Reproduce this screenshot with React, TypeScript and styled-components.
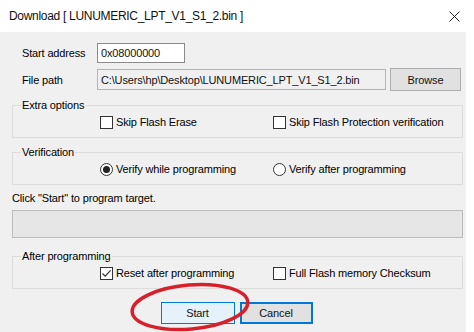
import React from "react";
import styled, { createGlobalStyle } from "styled-components";

const Global = createGlobalStyle`
  html, body { margin: 0; padding: 0; background: #ffffff; }
  body { font-family: "Liberation Sans", Arial, sans-serif; font-size: 11px; color: #000; }
  * { box-sizing: border-box; }
`;

const Window = styled.div`
  position: relative;
  width: 474px;
  height: 332px;
  display: flex;
  flex-direction: column;
  background: #ffffff;
  overflow: hidden;
`;

const TitleBar = styled.div`
  height: 32px;
  flex-shrink: 0;
  display: flex;
  align-items: center;
  justify-content: space-between;
  padding: 0 14px 0 9px;
`;

const Title = styled.span`
  font-size: 12px;
  letter-spacing: -0.3px;
  color: #111;
`;

const Body = styled.div`
  flex: 1;
  margin-right: 8px;
  background: #f0f0f0;
  padding: 11px 3px 0 12px;
  display: flex;
  flex-direction: column;
  letter-spacing: -0.15px;
`;

const FieldRow = styled.div<{ $h: number; $mt?: number }>`
  display: flex;
  align-items: center;
  gap: 4px;
  height: ${(p) => p.$h}px;
  margin-top: ${(p) => p.$mt ?? 0}px;
  padding-left: 10px;
`;

const FieldLabel = styled.span`
  width: 71px;
  flex-shrink: 0;
`;

const TextBox = styled.input<{ $w: number; $ro?: boolean }>`
  width: ${(p) => p.$w}px;
  height: ${(p) => (p.$ro ? 21 : 20)}px;
  border: 1px solid ${(p) => (p.$ro ? "#b4b4b4" : "#8a8a8a")};
  background: ${(p) => (p.$ro ? "#f0f0f0" : "#ffffff")};
  padding: 0 3px;
  font: inherit;
  letter-spacing: -0.15px;
  color: #111;
  outline: none;
`;

const Button = styled.button<{ $w: number; $variant?: "hover" | "default" | "plain" }>`
  width: ${(p) => p.$w}px;
  height: ${(p) => (p.$variant === "plain" ? 23 : 22)}px;
  font: inherit;
  letter-spacing: -0.15px;
  color: #111;
  padding: 0;
  background: ${(p) => (p.$variant === "hover" ? "#e5f1fb" : "#e1e1e1")};
  border: ${(p) =>
    p.$variant === "hover"
      ? "1px solid #0078d7"
      : p.$variant === "default"
      ? "2px solid #0078d7"
      : "1px solid #adadad"};
`;

const Group = styled.fieldset<{ $mt: number }>`
  margin: ${(p) => p.$mt}px 0 0 0;
  border: 1px solid #dcdcdc;
  padding: 3px 0 8px 0;
  min-width: 0;
`;

const Legend = styled.legend`
  margin-left: 8px;
  padding: 0 1px;
  line-height: 14px;
  height: 14px;
`;

const OptionRow = styled.div`
  display: grid;
  grid-template-columns: 173px 1fr;
  height: 14px;
  align-items: center;
  padding-left: 87px;
`;

const Option = styled.label`
  display: flex;
  align-items: center;
  gap: 3px;
  white-space: nowrap;
`;

const BoxMark = styled.span`
  width: 13px;
  height: 13px;
  border: 1px solid #333;
  background: #fff;
  display: flex;
  align-items: center;
  justify-content: center;
  flex-shrink: 0;
`;

const RadioMark = styled.span`
  width: 13px;
  height: 13px;
  border: 1px solid #333;
  border-radius: 50%;
  background: #fff;
  display: flex;
  align-items: center;
  justify-content: center;
  flex-shrink: 0;
`;

const RadioDot = styled.span`
  width: 7px;
  height: 7px;
  border-radius: 50%;
  background: #222;
`;

const Hint = styled.div`
  margin-top: 6px;
  line-height: 14px;
  height: 14px;
`;

const Progress = styled.div`
  margin-top: 5px;
  height: 28px;
  border: 1px solid #bcbcbc;
  background: #e6e6e6;
`;

const ButtonRow = styled.div`
  margin-top: 13px;
  display: flex;
  justify-content: center;
  gap: 5px;
  padding-right: 2px;
`;

const Ellipse = styled.svg`
  position: absolute;
  left: 0;
  top: 0;
  pointer-events: none;
`;

const Check = ({ checked }: { checked?: boolean }) => (
  <BoxMark>
    {checked && (
      <svg width="11" height="11" viewBox="0 0 11 11">
        <path d="M1.5 5.5 L4.2 8.2 L9.6 2.4" fill="none" stroke="#333" strokeWidth="1.2" />
      </svg>
    )}
  </BoxMark>
);

const Radio = ({ on }: { on?: boolean }) => <RadioMark>{on && <RadioDot />}</RadioMark>;

export default function App() {
  return (
    <>
      <Global />
      <Window>
        <TitleBar>
          <Title>Download [ LUNUMERIC_LPT_V1_S1_2.bin ]</Title>
          <svg width="11" height="11" viewBox="0 0 11 11">
            <path d="M0.5 0.5 L10.5 10.5 M10.5 0.5 L0.5 10.5" stroke="#222" strokeWidth="1" />
          </svg>
        </TitleBar>
        <Body>
          <FieldRow $h={20}>
            <FieldLabel>Start address</FieldLabel>
            <TextBox $w={88} readOnly value="0x08000000" />
          </FieldRow>
          <FieldRow $h={23} $mt={5}>
            <FieldLabel>File path</FieldLabel>
            <TextBox $w={289} $ro readOnly value="C:\Users\hp\Desktop\LUNUMERIC_LPT_V1_S1_2.bin" />
            <Button $w={71} $variant="plain">Browse</Button>
          </FieldRow>

          <Group $mt={7}>
            <Legend>Extra options</Legend>
            <OptionRow>
              <Option>
                <Check />
                Skip Flash Erase
              </Option>
              <Option>
                <Check />
                Skip Flash Protection verification
              </Option>
            </OptionRow>
          </Group>

          <Group $mt={7}>
            <Legend>Verification</Legend>
            <OptionRow>
              <Option>
                <Radio on />
                Verify while programming
              </Option>
              <Option>
                <Radio />
                Verify after programming
              </Option>
            </OptionRow>
          </Group>

          <Hint>Click "Start" to program target.</Hint>
          <Progress />

          <Group $mt={11}>
            <Legend>After programming</Legend>
            <OptionRow>
              <Option>
                <Check checked />
                Reset after programming
              </Option>
              <Option>
                <Check />
                Full Flash memory Checksum
              </Option>
            </OptionRow>
          </Group>

          <ButtonRow>
            <Button $w={74} $variant="hover">Start</Button>
            <Button $w={73} $variant="default">Cancel</Button>
          </ButtonRow>
        </Body>
        <Ellipse width="474" height="332" viewBox="0 0 474 332">
          <ellipse
            cx="190"
            cy="307"
            rx="58"
            ry="22"
            transform="rotate(-5 190 307)"
            fill="none"
            stroke="#d8202b"
            strokeWidth="3.5"
          />
        </Ellipse>
      </Window>
    </>
  );
}
